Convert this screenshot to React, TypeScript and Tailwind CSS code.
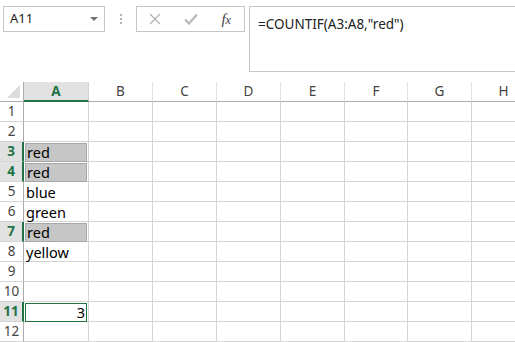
import React from 'react'

const cols = ['A', 'B', 'C', 'D', 'E', 'F', 'G', 'H']

const values: Record<number, string> = {
    3: 'red',
    4: 'red',
    5: 'blue',
    6: 'green',
    7: 'red',
    8: 'yellow',
}

const marked = [3, 4, 7]

export default function App() {
    const rows = Array.from({ length: 12 }, (_, i) => i + 1)

    return (
        <div className="w-[515px] h-[342px] overflow-hidden bg-white text-[#444]" style={{ fontFamily: '"Noto Sans", "Open Sans", sans-serif' }}>
            {/* Formula bar */}
            <div className="flex items-start h-[82px] pt-[6px] pl-[3px]">
                <div className="flex items-center justify-between w-[102px] h-[26px] border border-[#c6c6c6] pl-[6px] pr-[6px]">
                    <span className="text-[13px] text-[#222]">A11</span>
                    <svg width="8" height="5" viewBox="0 0 8 5">
                        <path d="M0 0h8L4 4z" fill="#707070" />
                    </svg>
                </div>
                <div className="flex flex-col items-center justify-center gap-[2px] w-[31px] h-[26px]">
                    <span className="w-[2px] h-[2px] bg-[#b5b5b5]" />
                    <span className="w-[2px] h-[2px] bg-[#b5b5b5]" />
                    <span className="w-[2px] h-[2px] bg-[#b5b5b5]" />
                </div>
                <div className="flex items-center w-[109px] h-[26px] border border-[#c6c6c6]">
                    <div className="w-[36px] flex justify-center">
                        <svg width="12" height="12" viewBox="0 0 12 12">
                            <path d="M1 1l10 10M11 1L1 11" stroke="#b0b0b0" strokeWidth="1.2" fill="none" />
                        </svg>
                    </div>
                    <div className="w-[36px] flex justify-center">
                        <svg width="14" height="12" viewBox="0 0 14 12">
                            <path d="M1 6.5l4 4L13 1.5" stroke="#b8b8b8" strokeWidth="2.2" fill="none" />
                        </svg>
                    </div>
                    <div className="w-[36px] flex justify-center">
                        <span className="italic text-[15px] text-[#404040]" style={{ fontFamily: '"Liberation Serif", serif' }}>
                            f<span className="text-[12px]">x</span>
                        </span>
                    </div>
                </div>
                <div className="ml-[4px] flex-1 h-[66px] border border-[#c6c6c6] border-r-0 pl-[8px] pt-[4px]">
                    <span className="text-[13.5px] text-[#222]">=COUNTIF(A3:A8,"red")</span>
                </div>
            </div>

            {/* Grid */}
            <div className="grid grid-cols-[24px_65px_64px_64px_64px_64px_63px_64px_64px]">
                {/* header row */}
                <div className="relative h-[20px] border-r border-b border-[#ababab]">
                    <svg className="absolute right-[3px] bottom-[3px]" width="13" height="13" viewBox="0 0 13 13">
                        <path d="M13 0V13H0z" fill="#dcdcdc" />
                    </svg>
                </div>
                {cols.map((c) => (
                    <div
                        key={c}
                        className={
                            c === 'A'
                                ? 'h-[20px] flex items-center justify-center border-r border-[#d4d4d4] bg-[#e1e1e1] border-b-2 border-b-[#217346] text-[#217346] font-bold text-[13.5px]'
                                : 'h-[20px] flex items-center justify-center border-r border-[#e1e1e1] border-b border-b-[#ababab] text-[13.5px]'
                        }
                    >
                        {c}
                    </div>
                ))}

                {rows.map((r) => {
                    const sel = marked.includes(r) || r === 11
                    return (
                        <React.Fragment key={r}>
                            <div
                                className={
                                    sel
                                        ? 'h-[20px] flex items-center justify-center bg-[#e1e1e1] border-r-2 border-r-[#217346] border-b border-b-[#d4d4d4] text-[#217346] font-bold text-[13.5px]'
                                        : 'h-[20px] flex items-center justify-center border-r border-r-[#ababab] border-b border-b-[#d4d4d4] text-[13.5px]'
                                }
                            >
                                {r}
                            </div>
                            {cols.map((c) => {
                                let content: React.ReactNode = null
                                if (c === 'A' && marked.includes(r)) {
                                    content = (
                                        <div className="h-full m-[1px] border border-[#a8a8a8] bg-[#c6c6c6] flex items-end pl-[1px] text-[14.5px] leading-[17px] text-black">
                                            {values[r]}
                                        </div>
                                    )
                                } else if (c === 'A' && values[r]) {
                                    content = (
                                        <div className="h-full flex items-end pl-[2px] text-[14.5px] leading-[18px] text-black">
                                            {values[r]}
                                        </div>
                                    )
                                } else if (c === 'A' && r === 11) {
                                    content = (
                                        <div className="h-full m-[1px] border border-[#217346] flex items-end justify-end pr-[1px] text-[14.5px] leading-[17px] text-black">
                                            3
                                        </div>
                                    )
                                }
                                return (
                                    <div key={c} className="h-[20px] border-r border-b border-[#d4d4d4] flex flex-col">
                                        {content}
                                    </div>
                                )
                            })}
                        </React.Fragment>
                    )
                })}
            </div>
        </div>
    )
}
